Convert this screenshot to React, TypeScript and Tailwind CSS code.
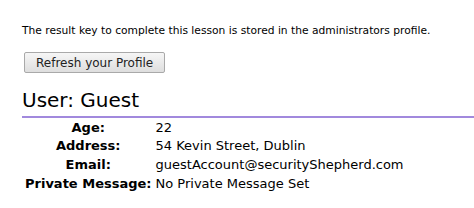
const rows: [string, string][] = [
  ['Age:', '22'],
  ['Address:', '54 Kevin Street, Dublin'],
  ['Email:', 'guestAccount@securityShepherd.com'],
  ['Private Message:', 'No Private Message Set'],
];

export default function App() {
  return (
    <div className="min-h-screen bg-white pl-[22px] pt-[24px] font-['DejaVu_Sans',sans-serif] text-black">
      <p className="text-[10.7px] leading-[13px]">
        The result key to complete this lesson is stored in the administrators profile.
      </p>
      <button className="ml-[2px] mt-[15px] h-[21px] rounded-[2px] border border-[#a9a9a9] bg-gradient-to-b from-[#f6f6f6] to-[#dedede] px-[11px] text-[12px] leading-[14px] text-[#222]">
        Refresh your Profile
      </button>
      <h2 className="mt-[14px] border-b-2 border-[#a189dd] pb-[4px] text-[20px] leading-[24px] font-normal">
        User: Guest
      </h2>
      <table className="ml-px border-separate border-spacing-[2px] text-[13px] leading-[14.7px]">
        <tbody>
          {rows.map(([label, value]) => (
            <tr key={label}>
              <th className="px-0 py-px text-center font-bold">{label}</th>
              <td className="py-px pl-[2px] pr-px">{value}</td>
            </tr>
          ))}
        </tbody>
      </table>
    </div>
  );
}
